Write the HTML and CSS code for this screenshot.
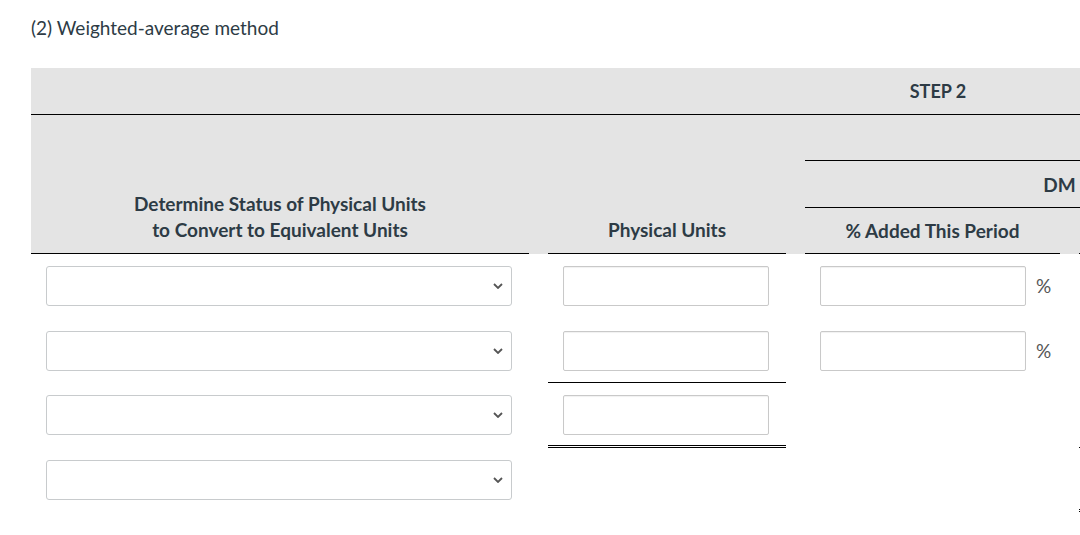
FILE: index.html
```html
<!DOCTYPE html>
<html lang="en">
<head>
<meta charset="utf-8">
<title>Weighted-average method</title>
<link rel="stylesheet" href="styles.css">
</head>
<body>
<div class="page">
  <p class="title">(2) Weighted-average method</p>
  <div class="clip">
  <div class="sheet">
    <div class="head">
      <div class="step-row">
        <div class="step-label">STEP 2</div>
      </div>
      <div class="head-grid">
        <div class="hc hc-status"><span>Determine Status of Physical Units<br>to Convert to Equivalent Units</span></div>
        <div class="hc hc-phys"><span>Physical Units</span></div>
        <div class="g-top"></div>
        <div class="g-dm">DM</div>
        <div class="hc-sub hc-pct">% Added This Period</div>
        <div class="hc-sub hc-eq"></div>
      </div>
    </div>
    <div class="body-grid">
      <!-- row 1 -->
      <div class="cell c-sel"><div class="select-wrap"><select class="sel" aria-label="Status 1"></select><svg class="chev" viewBox="0 0 10 6" width="10" height="6"><path d="M1 1 L5 5 L9 1" fill="none" stroke="#555" stroke-width="1.8"/></svg></div></div>
      <div class="cell c-phys"><input class="box" type="text" aria-label="Physical units 1"></div>
      <div class="cell c-pct"><input class="box pct-box" type="text" aria-label="Percent 1"><span class="pct">%</span></div>
      <div class="cell c-eq"></div>
      <!-- row 2 -->
      <div class="cell c-sel"><div class="select-wrap"><select class="sel" aria-label="Status 2"></select><svg class="chev" viewBox="0 0 10 6" width="10" height="6"><path d="M1 1 L5 5 L9 1" fill="none" stroke="#555" stroke-width="1.8"/></svg></div></div>
      <div class="cell c-phys line-single"><input class="box" type="text" aria-label="Physical units 2"></div>
      <div class="cell c-pct"><input class="box pct-box" type="text" aria-label="Percent 2"><span class="pct">%</span></div>
      <div class="cell c-eq"></div>
      <!-- row 3 -->
      <div class="cell c-sel"><div class="select-wrap"><select class="sel" aria-label="Status 3"></select><svg class="chev" viewBox="0 0 10 6" width="10" height="6"><path d="M1 1 L5 5 L9 1" fill="none" stroke="#555" stroke-width="1.8"/></svg></div></div>
      <div class="cell c-phys line-double"><input class="box" type="text" aria-label="Physical units total"></div>
      <div class="cell c-pct"></div>
      <div class="cell c-eq line-single"></div>
      <!-- row 4 -->
      <div class="cell c-sel"><div class="select-wrap"><select class="sel" aria-label="Status 4"></select><svg class="chev" viewBox="0 0 10 6" width="10" height="6"><path d="M1 1 L5 5 L9 1" fill="none" stroke="#555" stroke-width="1.8"/></svg></div></div>
      <div class="cell c-phys"></div>
      <div class="cell c-pct"></div>
      <div class="cell c-eq line-double"></div>
    </div>
  </div>
  </div>
</div>
</body>
</html>
```
FILE: styles.css
```css
html, body {
  margin: 0;
  padding: 0;
  overflow: hidden;
  background: #fff;
}

body {
  font-family: Lato, "Open Sans", "Liberation Sans", sans-serif;
  color: #2d3b45;
}

.page {
  padding: 16px 0 0 31px;
}

.title {
  margin: 0 0 28px;
  font-size: 19px;
  line-height: 24px;
  font-weight: 400;
  color: #2d3b45;
}

.clip {
  overflow: hidden;
}

.sheet {
  width: 1320px;
}

.head {
  background: #e4e4e4;
}

.step-row {
  display: grid;
  grid-template-columns: 498px 238px 255px 235px;
  column-gap: 19px;
  height: 47px;
  box-sizing: border-box;
  border-bottom: 1px solid #000;
}

.step-label {
  grid-column: 2 / 5;
  text-align: center;
  padding-left: 14px;
  font-size: 18px;
  font-weight: 700;
  line-height: 46px;
}

.head-grid {
  display: grid;
  grid-template-columns: 498px 238px 255px 235px;
  grid-template-rows: 46px 47px 46px;
  column-gap: 19px;
  font-size: 19px;
  font-weight: 700;
}

.hc {
  grid-row: 1 / 4;
  display: flex;
  align-items: flex-end;
  justify-content: center;
  text-align: center;
  line-height: 26px;
  padding-bottom: 10px;
  border-bottom: 1px solid #000;
  box-sizing: border-box;
}

.hc-status { grid-column: 1; }
.hc-phys { grid-column: 2; }

.g-top {
  grid-column: 3 / 5;
  grid-row: 1;
  border-bottom: 1px solid #000;
}

.g-dm {
  grid-column: 3 / 5;
  grid-row: 2;
  border-bottom: 1px solid #000;
  display: flex;
  align-items: center;
  justify-content: center;
}

.hc-sub {
  grid-row: 3;
  border-bottom: 1px solid #000;
  display: flex;
  align-items: center;
  justify-content: center;
}

.hc-pct { grid-column: 3; }
.hc-eq { grid-column: 4; }

.body-grid {
  display: grid;
  grid-template-columns: 498px 238px 255px 235px;
  grid-auto-rows: 64.5px;
  column-gap: 19px;
}

.cell {
  box-sizing: border-box;
  padding-top: 12px;
}

.c-sel { padding-left: 15px; padding-right: 17px; }
.c-phys { padding-left: 15px; padding-right: 17px; }
.c-pct {
  padding-left: 15px;
  display: flex;
  align-items: flex-start;
}

.line-single { border-bottom: 1px solid #000; }
.line-double { border-bottom: 3px double #000; }

.select-wrap {
  position: relative;
  height: 40px;
}

.sel {
  appearance: none;
  -webkit-appearance: none;
  display: block;
  width: 100%;
  height: 40px;
  margin: 0;
  box-sizing: border-box;
  border: 1px solid #c8cbcd;
  border-radius: 3px;
  background: #fff;
  font-family: inherit;
}

.chev {
  position: absolute;
  right: 9px;
  top: 17px;
}

.box {
  display: block;
  box-sizing: border-box;
  width: 100%;
  height: 40px;
  margin: 0;
  border: 1px solid #c9c9c9;
  border-radius: 2px;
  box-shadow: inset 0 1px 1px rgba(0, 0, 0, 0.06);
  background: #fff;
  font-family: inherit;
}

.pct-box {
  width: 206px;
  flex: none;
}

.pct {
  margin-left: 10px;
  font-size: 19px;
  line-height: 40px;
  color: #555;
}
```
